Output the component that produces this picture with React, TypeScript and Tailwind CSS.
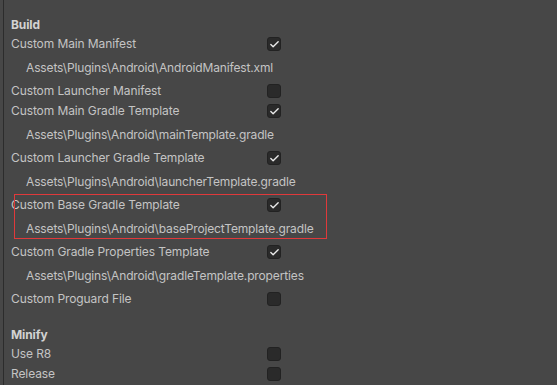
import { Check } from "lucide-react";

type Row =
  | { kind: "header"; label: string; gapTop?: boolean }
  | { kind: "toggle"; label: string; checked: boolean }
  | { kind: "path"; label: string };

const rows: Row[] = [
  { kind: "header", label: "Build" },
  { kind: "toggle", label: "Custom Main Manifest", checked: true },
  { kind: "path", label: "Assets\\Plugins\\Android\\AndroidManifest.xml" },
  { kind: "toggle", label: "Custom Launcher Manifest", checked: false },
  { kind: "toggle", label: "Custom Main Gradle Template", checked: true },
  { kind: "path", label: "Assets\\Plugins\\Android\\mainTemplate.gradle" },
  { kind: "toggle", label: "Custom Launcher Gradle Template", checked: true },
  { kind: "path", label: "Assets\\Plugins\\Android\\launcherTemplate.gradle" },
  { kind: "toggle", label: "Custom Base Gradle Template", checked: true },
  { kind: "path", label: "Assets\\Plugins\\Android\\baseProjectTemplate.gradle" },
  { kind: "toggle", label: "Custom Gradle Properties Template", checked: true },
  { kind: "path", label: "Assets\\Plugins\\Android\\gradleTemplate.properties" },
  { kind: "toggle", label: "Custom Proguard File", checked: false },
  { kind: "header", label: "Minify", gapTop: true },
  { kind: "toggle", label: "Use R8", checked: false },
  { kind: "toggle", label: "Release", checked: false },
];

const Checkbox = ({ checked }: { checked: boolean }) => (
  <div className="w-[14px] h-[14px] rounded-[3px] bg-[#2a2a2a] border border-[#222222] flex items-center justify-center">
    {checked && <Check className="w-[11px] h-[11px] text-[#e8e8e8]" strokeWidth={3} />}
  </div>
);

export default function App() {
  return (
    <div
      className="relative w-[557px] h-[385px] overflow-hidden bg-[#474747] text-[12px] text-[#c4c4c4] tracking-[-0.1px]"
      style={{ fontFamily: "Inter, 'Noto Sans', sans-serif" }}
    >
      <div className="flex h-full">
        <div className="w-[3px]" />
        <div className="w-px bg-[#2c2c2c]" />
        <div className="flex-1 pl-[7px] pt-[16px] flex flex-col">
          {rows.map((row, i) => {
            if (row.kind === "header") {
              return (
                <div
                  key={i}
                  className={`h-[18px] flex items-center font-bold text-[#d2d2d2] ${row.gapTop ? "mt-[17px]" : ""}`}
                >
                  {row.label}
                </div>
              );
            }
            if (row.kind === "path") {
              return (
                <div key={i} className="h-[27px] flex items-center pl-[15px] pt-[1px] tracking-[-0.14px]">
                  {row.label}
                </div>
              );
            }
            return (
              <div key={i} className="h-[20px] flex items-center">
                <div className="w-[256px]">{row.label}</div>
                <Checkbox checked={row.checked} />
              </div>
            );
          })}
        </div>
      </div>
      <div className="absolute left-[14px] top-[194px] w-[313px] h-[45px] border border-[#e0393b]" />
    </div>
  );
}
